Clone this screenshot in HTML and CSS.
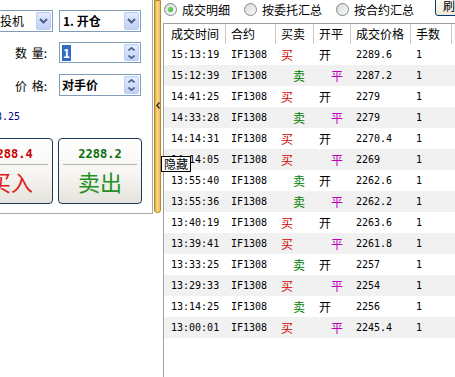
FILE: index.html
```html
<!DOCTYPE html>
<html lang="zh-CN">
<head>
    <meta charset="UTF-8">
    <meta name="viewport" content="width=device-width, initial-scale=1.0">
    <title>成交明细</title>

    <link rel="stylesheet" href="styles.css">

</head>
<body>

<!-- 下单面板 (左侧, 已被部分滚出) -->
<div class="order-panel">
    <div class="combo-row">
        <div class="combo combo-wide">
            <span class="combo-text combo-cut">投机</span>
            <span class="drop-btn"><svg width="9" height="6" viewBox="0 0 9 6"><polyline points="1,1 4.5,4.5 8,1" fill="none" stroke="#4d6185" stroke-width="2"/></svg></span>
        </div>
        <div class="combo">
            <span class="combo-text bold">1. 开仓</span>
            <span class="drop-btn"><svg width="9" height="6" viewBox="0 0 9 6"><polyline points="1,1 4.5,4.5 8,1" fill="none" stroke="#4d6185" stroke-width="2"/></svg></span>
        </div>
    </div>

    <div class="field">
        <label>数 量:</label>
        <div class="spin">
            <span class="spin-text"><span class="selected">1</span></span>
            <span class="spin-btn">
                <svg width="7" height="4" viewBox="0 0 7 4"><polyline points="0.5,3.5 3.5,0.8 6.5,3.5" fill="none" stroke="#4d6185" stroke-width="1.6"/></svg>
                <svg width="7" height="4" viewBox="0 0 7 4"><polyline points="0.5,0.5 3.5,3.2 6.5,0.5" fill="none" stroke="#4d6185" stroke-width="1.6"/></svg>
            </span>
        </div>
    </div>

    <div class="field field-price">
        <label>价 格:</label>
        <div class="spin spin-tall">
            <span class="spin-text bold">对手价</span>
            <span class="spin-btn">
                <svg width="7" height="4" viewBox="0 0 7 4"><polyline points="0.5,3.5 3.5,0.8 6.5,3.5" fill="none" stroke="#4d6185" stroke-width="1.6"/></svg>
                <svg width="7" height="4" viewBox="0 0 7 4"><polyline points="0.5,0.5 3.5,3.2 6.5,0.5" fill="none" stroke="#4d6185" stroke-width="1.6"/></svg>
            </span>
        </div>
    </div>

    <div class="last-price">2293.25</div>

    <div class="trade-btns">
        <div class="trade-btn buy">
            <span class="quote">2288.4</span>
            <span class="rule"></span>
            <span class="action">买入</span>
        </div>
        <div class="trade-btn sell">
            <span class="quote">2288.2</span>
            <span class="rule"></span>
            <span class="action">卖出</span>
        </div>
    </div>
</div>

<!-- 折叠分隔条 -->
<div class="splitter">
    <svg width="4" height="7" viewBox="0 0 4 7"><polyline points="3.5,0.5 0.8,3.5 3.5,6.5" fill="none" stroke="#222" stroke-width="1.3"/></svg>
</div>

<!-- 成交列表 -->
<div class="deals">
    <div class="deal-filter">
        <div class="radio-item"><span class="radio checked"></span>成交明细</div>
        <div class="radio-item"><span class="radio"></span>按委托汇总</div>
        <div class="radio-item"><span class="radio"></span>按合约汇总</div>
        <button class="refresh-btn">刷新</button>
    </div>

    <div class="deal-grid">
        <div class="grid-head">
            <span>成交时间</span><span>合约</span><span>买卖</span><span>开平</span><span>成交价格</span><span>手数</span><span></span>
        </div>
        <div class="grid-row"><span class="num">15:13:19</span><span class="num">IF1308</span><span class="buy">买</span><span class="open">开</span><span class="num">2289.6</span><span class="num">1</span><span></span></div>
        <div class="grid-row"><span class="num">15:12:39</span><span class="num">IF1308</span><span class="sell">卖</span><span class="close">平</span><span class="num">2287.2</span><span class="num">1</span><span></span></div>
        <div class="grid-row"><span class="num">14:41:25</span><span class="num">IF1308</span><span class="buy">买</span><span class="open">开</span><span class="num">2279</span><span class="num">1</span><span></span></div>
        <div class="grid-row"><span class="num">14:33:28</span><span class="num">IF1308</span><span class="sell">卖</span><span class="close">平</span><span class="num">2279</span><span class="num">1</span><span></span></div>
        <div class="grid-row"><span class="num">14:14:31</span><span class="num">IF1308</span><span class="buy">买</span><span class="open">开</span><span class="num">2270.4</span><span class="num">1</span><span></span></div>
        <div class="grid-row"><span class="num">14:14:05</span><span class="num">IF1308</span><span class="buy">买</span><span class="close">平</span><span class="num">2269</span><span class="num">1</span><span></span></div>
        <div class="grid-row"><span class="num">13:55:40</span><span class="num">IF1308</span><span class="sell">卖</span><span class="open">开</span><span class="num">2262.6</span><span class="num">1</span><span></span></div>
        <div class="grid-row"><span class="num">13:55:36</span><span class="num">IF1308</span><span class="sell">卖</span><span class="close">平</span><span class="num">2262.2</span><span class="num">1</span><span></span></div>
        <div class="grid-row"><span class="num">13:40:19</span><span class="num">IF1308</span><span class="buy">买</span><span class="open">开</span><span class="num">2263.6</span><span class="num">1</span><span></span></div>
        <div class="grid-row"><span class="num">13:39:41</span><span class="num">IF1308</span><span class="buy">买</span><span class="close">平</span><span class="num">2261.8</span><span class="num">1</span><span></span></div>
        <div class="grid-row"><span class="num">13:33:25</span><span class="num">IF1308</span><span class="sell">卖</span><span class="open">开</span><span class="num">2257</span><span class="num">1</span><span></span></div>
        <div class="grid-row"><span class="num">13:29:33</span><span class="num">IF1308</span><span class="buy">买</span><span class="close">平</span><span class="num">2254</span><span class="num">1</span><span></span></div>
        <div class="grid-row"><span class="num">13:14:25</span><span class="num">IF1308</span><span class="sell">卖</span><span class="open">开</span><span class="num">2256</span><span class="num">1</span><span></span></div>
        <div class="grid-row"><span class="num">13:00:01</span><span class="num">IF1308</span><span class="buy">买</span><span class="close">平</span><span class="num">2245.4</span><span class="num">1</span><span></span></div>
    </div>
</div>

<!-- 分隔条的提示 -->
<div class="tip">隐藏</div>

</body>
</html>
```

FILE: styles.css
```css
/* Page */
body {
    margin: 0;
    width: 455px;
    height: 377px;
    overflow: hidden;
    display: flex;
    align-items: flex-start;
    position: relative;
    background: #fff;
    color: #000;
    font-family: "Noto Sans CJK SC", sans-serif;
    font-size: 12px;
}

.bold {
    font-weight: bold;
}

/* Left order panel */
.order-panel {
    flex: none;
    width: 153px;
    height: 214px;
    box-sizing: border-box;
    padding-top: 10px;
    border-right: 1px solid #a8a8a8;
    border-bottom: 1px solid #a8a8a8;
    overflow: hidden;
}

.combo-row {
    display: flex;
    gap: 6px;
    margin-left: -31px;
}

.combo {
    width: 82px;
    height: 22px;
    box-sizing: border-box;
    padding: 1px;
    border: 1px solid #7f9db9;
    display: flex;
    background: #fff;
}

.combo-wide {
    width: 84px;
}

.combo-text {
    flex: 1;
    line-height: 18px;
    padding-left: 2px;
    white-space: nowrap;
}

.combo-cut {
    padding-left: 29px;
}

.drop-btn,
.spin-btn {
    flex: none;
    width: 15px;
    box-sizing: border-box;
    border: 1px solid #bccdf3;
    border-radius: 2px;
    background: linear-gradient(#e2eafe, #c0d2f8);
    display: flex;
    align-items: center;
    justify-content: center;
}

.spin-btn {
    flex-direction: column;
    gap: 4px;
}

.field {
    display: flex;
    align-items: center;
    margin-top: 10px;
}

.field label {
    flex: none;
    width: 47px;
    margin-right: 12px;
    text-align: right;
    word-spacing: 2px;
}

.field-price {
    margin-top: 11px;
}

.spin {
    width: 82px;
    height: 21px;
    box-sizing: border-box;
    padding: 1px;
    border: 1px solid #7f9db9;
    display: flex;
}

.spin-tall {
    height: 22px;
}

.spin-text {
    flex: 1;
    line-height: 17px;
    padding-left: 1px;
}

.selected {
    display: inline-block;
    padding: 0 1px;
    background: #316ac5;
    color: #fff;
    font-weight: bold;
    line-height: 16px;
}

.last-price {
    margin: 15px 0 0 -22px;
    font-family: "DejaVu Sans Mono", monospace;
    font-size: 10px;
    line-height: 12px;
    color: #000080;
}

/* Buy / sell buttons */
.trade-btns {
    display: flex;
    gap: 5px;
    margin: 15px 0 0 -31px;
}

.trade-btn {
    width: 84px;
    height: 66px;
    box-sizing: border-box;
    padding-top: 7px;
    border: 1px solid #1e3a5a;
    border-radius: 4px;
    background: linear-gradient(#ffffff, #f6f5f1 55%, #e4e3dc);
    display: flex;
    flex-direction: column;
}

.quote {
    text-align: center;
    font-family: "DejaVu Sans Mono", monospace;
    font-weight: bold;
    font-size: 12px;
    line-height: 16px;
}

.rule {
    height: 1px;
    margin: 2px 4px 0;
    background: #b4b4b4;
}

.action {
    margin-top: 2px;
    text-align: center;
    font-size: 22px;
    line-height: 28px;
}

.buy .quote { color: #c80000; }
.buy .action { color: #e01818; }
.sell .quote { color: #0a700a; }
.sell .action { color: #229022; }

/* Splitter bar */
.splitter {
    flex: none;
    width: 7px;
    height: 213px;
    margin-left: 1px;
    box-sizing: border-box;
    border: 1px solid #b8862a;
    border-radius: 0 0 3px 3px;
    background: linear-gradient(to right, #e0a940, #f8d888 45%, #ecbc5c);
    display: flex;
    align-items: center;
    justify-content: center;
}

.splitter svg {
    margin-bottom: 2px;
}

/* Deals list */
.deals {
    flex: 1;
    height: 377px;
    margin-left: 2px;
    display: flex;
    flex-direction: column;
}

.deal-filter {
    height: 18px;
    padding-left: 1px;
    display: flex;
    align-items: center;
    white-space: nowrap;
}

.radio-item {
    display: flex;
    align-items: center;
    margin-right: 14px;
}

.radio {
    width: 13px;
    height: 13px;
    box-sizing: border-box;
    margin-right: 5px;
    border: 1px solid #7d8896;
    border-radius: 50%;
    background: linear-gradient(135deg, #d8d8d2, #fbfbfa);
    display: flex;
    align-items: center;
    justify-content: center;
}

.radio.checked::after {
    content: "";
    width: 5px;
    height: 5px;
    border-radius: 50%;
    background: radial-gradient(circle at 40% 40%, #7ee27e, #1e9a1e);
}

.refresh-btn {
    align-self: flex-start;
    height: 20px;
    margin: -4px 0 0 7px;
    padding: 0 7px;
    box-sizing: border-box;
    border: 1px solid #003c74;
    border-radius: 3px;
    background: linear-gradient(#ffffff, #ece9d8);
    font: 12px "Noto Sans CJK SC", sans-serif;
    line-height: 18px;
    white-space: nowrap;
}

.deal-grid {
    flex: 1;
    margin-top: 5px;
    border-top: 1px solid #a0a0a0;
    border-left: 1px solid #a0a0a0;
}

.grid-head,
.grid-row {
    display: grid;
    grid-template-columns: 62px 50px 38px 37px 60px 41px 1fr;
    white-space: nowrap;
}

.grid-head span,
.grid-row span {
    padding-left: 5px;
    overflow: hidden;
}

.grid-head span:first-child,
.grid-row span:first-child {
    padding-left: 7px;
}

.grid-head {
    height: 20px;
    line-height: 20px;
}

.grid-head span {
    border-right: 1px solid #c8c8c8;
}

.grid-row {
    height: 21px;
    line-height: 21px;
}

.grid-row:nth-child(odd) {
    background: #f1f1f1;
}

.num {
    font-family: "DejaVu Sans Mono", monospace;
    font-size: 10px;
}

.grid-row .buy { color: #d40000; }
.grid-row .sell { color: #008000; padding-left: 17px; }
.grid-row .close { color: #c000c0; padding-left: 17px; }

/* Tooltip over the splitter */
.tip {
    position: absolute;
    left: 161px;
    top: 156px;
    padding: 0 2px;
    border: 1px solid #000;
    background: #fff;
    line-height: 14px;
}
```
